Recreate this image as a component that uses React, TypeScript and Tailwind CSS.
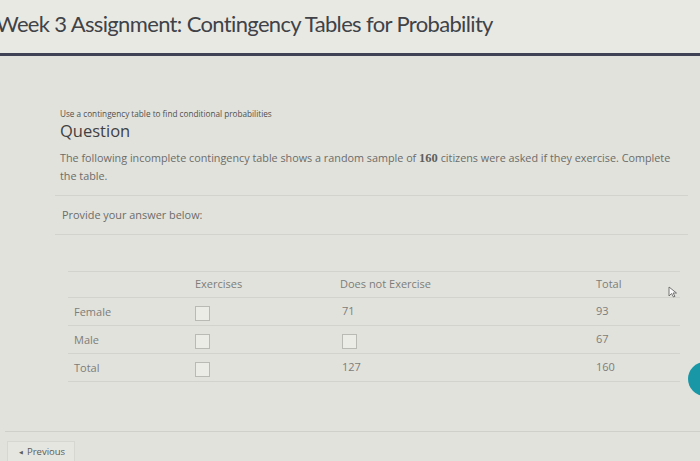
import React from "react";

const rows = [
  { label: "Female", notEx: "71", total: "93" },
  { label: "Male", notEx: null, total: "67" },
  { label: "Total", notEx: "127", total: "160" },
];

function Box() {
  return <span className="inline-block h-[15px] w-[15px] border border-[#b9bab4] bg-[#ecece7]" />;
}

export default function App() {
  return (
    <div className="relative h-[461px] w-[700px] overflow-hidden bg-[#e2e2dc] font-['Open_Sans',sans-serif] text-[#6a6b68]">
      {/* Header */}
      <div className="h-[53px] bg-[#e9e9e4] pt-[10px]">
        <h1 className="-ml-[4px] whitespace-nowrap font-['Lato',sans-serif] text-[22px] leading-[28px] tracking-[-0.65px] text-[#404247]">
          Week 3 Assignment: Contingency Tables for Probability
        </h1>
      </div>
      <div className="h-[3px] bg-[#3e4254]" />

      {/* Question */}
      <div className="ml-[55px] mr-[12px] mt-[52px] border-b border-[#d2d3cd] pb-[10px] pl-[5px]">
        <p className="text-[8.2px] leading-[12px] text-[#4f504d]">Use a contingency table to find conditional probabilities</p>
        <h2 className="text-[16.5px] leading-[22px] text-[#3f4042]">Question</h2>
        <p className="mt-[7px] pr-[6px] text-[10.8px] leading-[18px] text-[#6b6c69]">
          The following incomplete contingency table shows a random sample of{" "}
          <span className="font-['Liberation_Serif',serif] text-[12.5px] font-bold leading-none text-[#5e5f5c]">160</span>{" "}
          citizens were asked if they exercise. Complete the table.
        </p>
      </div>
      <div className="ml-[55px] mr-[12px] border-b border-[#d2d3cd] py-[10px] pl-[7px]">
        <p className="text-[10.9px] leading-[18px] text-[#6b6c69]">Provide your answer below:</p>
      </div>

      {/* Table */}
      <div className="ml-[68px] mr-[20px] mt-[36px] border-t border-[#d2d3cd] text-[11px] text-[#7c7d7a]">
        <div className="flex h-[26px] items-center border-b border-[#d2d3cd]">
          <span className="w-[127px]" />
          <span className="w-[145px]">Exercises</span>
          <span className="w-[256px]">Does not Exercise</span>
          <span>Total</span>
        </div>
        {rows.map((r) => (
          <div key={r.label} className="flex h-[28px] items-center border-b border-[#d2d3cd]">
            <span className="w-[127px] pl-[6px] pt-[2px]">{r.label}</span>
            <span className="flex w-[145px] pt-[4px]">
              <Box />
            </span>
            <span className="flex w-[256px] pl-[2px]">
              {r.notEx ?? (
                <span className="flex pt-[4px]">
                  <Box />
                </span>
              )}
            </span>
            <span>{r.total}</span>
          </div>
        ))}
      </div>

      {/* Footer */}
      <div className="absolute bottom-0 left-[5px] right-0 flex h-[30px] items-end border-t border-[#cfd0ca]">
        <div className="ml-[2px] flex h-[20px] items-center gap-[4px] border border-b-0 border-[#d6d7d1] bg-[#e6e6e0] pl-[11px] pr-[9px] text-[9.5px] leading-[12px] text-[#5b5c5a]">
          <span className="text-[5px]">◀</span>
          <span>Previous</span>
        </div>
      </div>

      {/* Cursor */}
      <svg className="absolute left-[668px] top-[286px]" width="10" height="12" viewBox="0 0 10 12">
        <path d="M1 1 L1 10 L3.5 7.5 L5.5 11 L7 10.3 L5 7 L8.5 7 Z" fill="#fafafa" stroke="#666" strokeWidth="0.9" />
      </svg>

      {/* Teal floating button */}
      <div className="absolute left-[688px] top-[362px] h-[34px] w-[34px] rounded-full bg-[#1a97a6]" />
    </div>
  );
}
